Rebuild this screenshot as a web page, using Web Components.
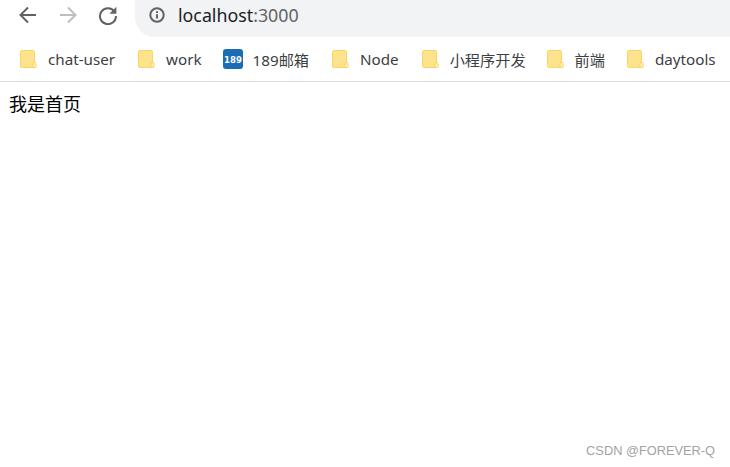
<!DOCTYPE html>
<html>
<head>
<meta charset="utf-8">
<style>
  html, body { margin: 0; height: 100%; background: #fff; overflow: hidden; }
  body { display: flex; flex-direction: column; font-family: "Noto Sans", "Noto Sans CJK SC", sans-serif; }
</style>
</head>
<body>
<browser-toolbar></browser-toolbar>
<bookmark-bar>
  <bookmark-item style="margin-right:23px">chat-user</bookmark-item>
  <bookmark-item style="margin-right:21px">work</bookmark-item>
  <bookmark-item icon="mail" style="margin-right:23px">189邮箱</bookmark-item>
  <bookmark-item style="margin-right:23px">Node</bookmark-item>
  <bookmark-item style="margin-right:21px">小程序开发</bookmark-item>
  <bookmark-item style="margin-right:22px">前端</bookmark-item>
  <bookmark-item>daytools</bookmark-item>
</bookmark-bar>
<home-page>我是首页</home-page>
<script>
class BrowserToolbar extends HTMLElement {
  connectedCallback() {
    this.attachShadow({ mode: 'open' });
    this.shadowRoot.innerHTML = `
      <style>
        :host { display: flex; align-items: stretch; height: 37px; padding-left: 17px; background: #fff; }
        .btn { width: 22px; height: 30px; margin-right: 18px; display: flex; align-items: center; justify-content: center; }
        .btn.reload { margin-right: 16px; }
        .omnibox {
          flex: 1; display: flex; align-items: center; height: 37px; padding: 0 0 7px 14px; box-sizing: border-box;
          background: #f1f3f4; border-radius: 0 0 0 20px;
        }
        .url { margin-left: 13px; font: 17.8px "Noto Sans", sans-serif; color: #202124; }
        .url span { color: #5f6368; }
      </style>
      <div class="btn"><svg width="20" height="20" viewBox="0 0 20 20"><path d="M18 10H3.5M10 2.5 2.5 10l7.5 7.5" fill="none" stroke="#5f6368" stroke-width="2"/></svg></div>
      <div class="btn"><svg width="20" height="20" viewBox="0 0 20 20"><path d="M2 10h14.5M10 2.5l7.5 7.5-7.5 7.5" fill="none" stroke="#bcbec1" stroke-width="2"/></svg></div>
      <div class="btn reload"><svg width="20" height="20" viewBox="0 0 20 20"><path d="M16.3 6.2A8 8 0 1 0 18 11" fill="none" stroke="#5f6368" stroke-width="2"/><path d="M18.4 1.8v7h-7z" fill="#5f6368"/></svg></div>
      <div class="omnibox">
        <svg width="16" height="16" viewBox="0 0 16 16"><circle cx="8" cy="8" r="6.7" fill="none" stroke="#5f6368" stroke-width="2"/><path d="M8 7.2v4.4M8 4.2v1.8" stroke="#5f6368" stroke-width="2"/></svg>
        <div class="url">localhost<span>:3000</span></div>
      </div>`;
  }
}
class BookmarkBar extends HTMLElement {
  connectedCallback() {
    this.attachShadow({ mode: 'open' });
    this.shadowRoot.innerHTML = `
      <style>
        :host { display: flex; align-items: center; height: 44px; padding-left: 20px; border-bottom: 1px solid #dadce0; white-space: nowrap; }
      </style>
      <slot></slot>`;
  }
}
class BookmarkItem extends HTMLElement {
  connectedCallback() {
    const folder = `<svg width="17" height="18" viewBox="0 0 17 18"><rect x=".5" y=".5" width="14" height="17" rx="1.5" fill="#fee38d" stroke="#fad565"/><rect x="13" y="12.5" width="3" height="5" rx="1" fill="#fff3c4" stroke="#f8cf58"/></svg>`;
    const mail = `<svg width="20" height="20" viewBox="0 0 20 20"><rect width="20" height="20" rx="3" fill="#1a6db5"/><text x="10" y="13.5" text-anchor="middle" font-family="DejaVu Sans" font-weight="700" font-size="8.6" fill="#fff">189</text></svg>`;
    const isMail = this.getAttribute('icon') === 'mail';
    this.attachShadow({ mode: 'open' });
    this.shadowRoot.innerHTML = `
      <style>
        :host { display: flex; align-items: center; font-size: 15.2px; color: #3c4043; }
        svg { display: block; margin-right: ${isMail ? 10 : 11}px; }
      </style>
      ${isMail ? mail : folder}<slot></slot>`;
  }
}
class HomePage extends HTMLElement {
  connectedCallback() {
    this.attachShadow({ mode: 'open' });
    this.shadowRoot.innerHTML = `
      <style>
        :host { flex: 1; display: flex; flex-direction: column; padding: 8px 15px 6px 9px; min-height: 0; }
        .body { font: 18px/27px "Noto Sans CJK SC", sans-serif; color: #000; }
        .mark { margin-top: auto; align-self: flex-end; font: 12.8px/20px "Liberation Sans", sans-serif; color: #a3a3a3; }
      </style>
      <div class="body"><slot></slot></div>
      <div class="mark">CSDN @FOREVER-Q</div>`;
  }
}
customElements.define('browser-toolbar', BrowserToolbar);
customElements.define('bookmark-bar', BookmarkBar);
customElements.define('bookmark-item', BookmarkItem);
customElements.define('home-page', HomePage);
</script>
</body>
</html>
